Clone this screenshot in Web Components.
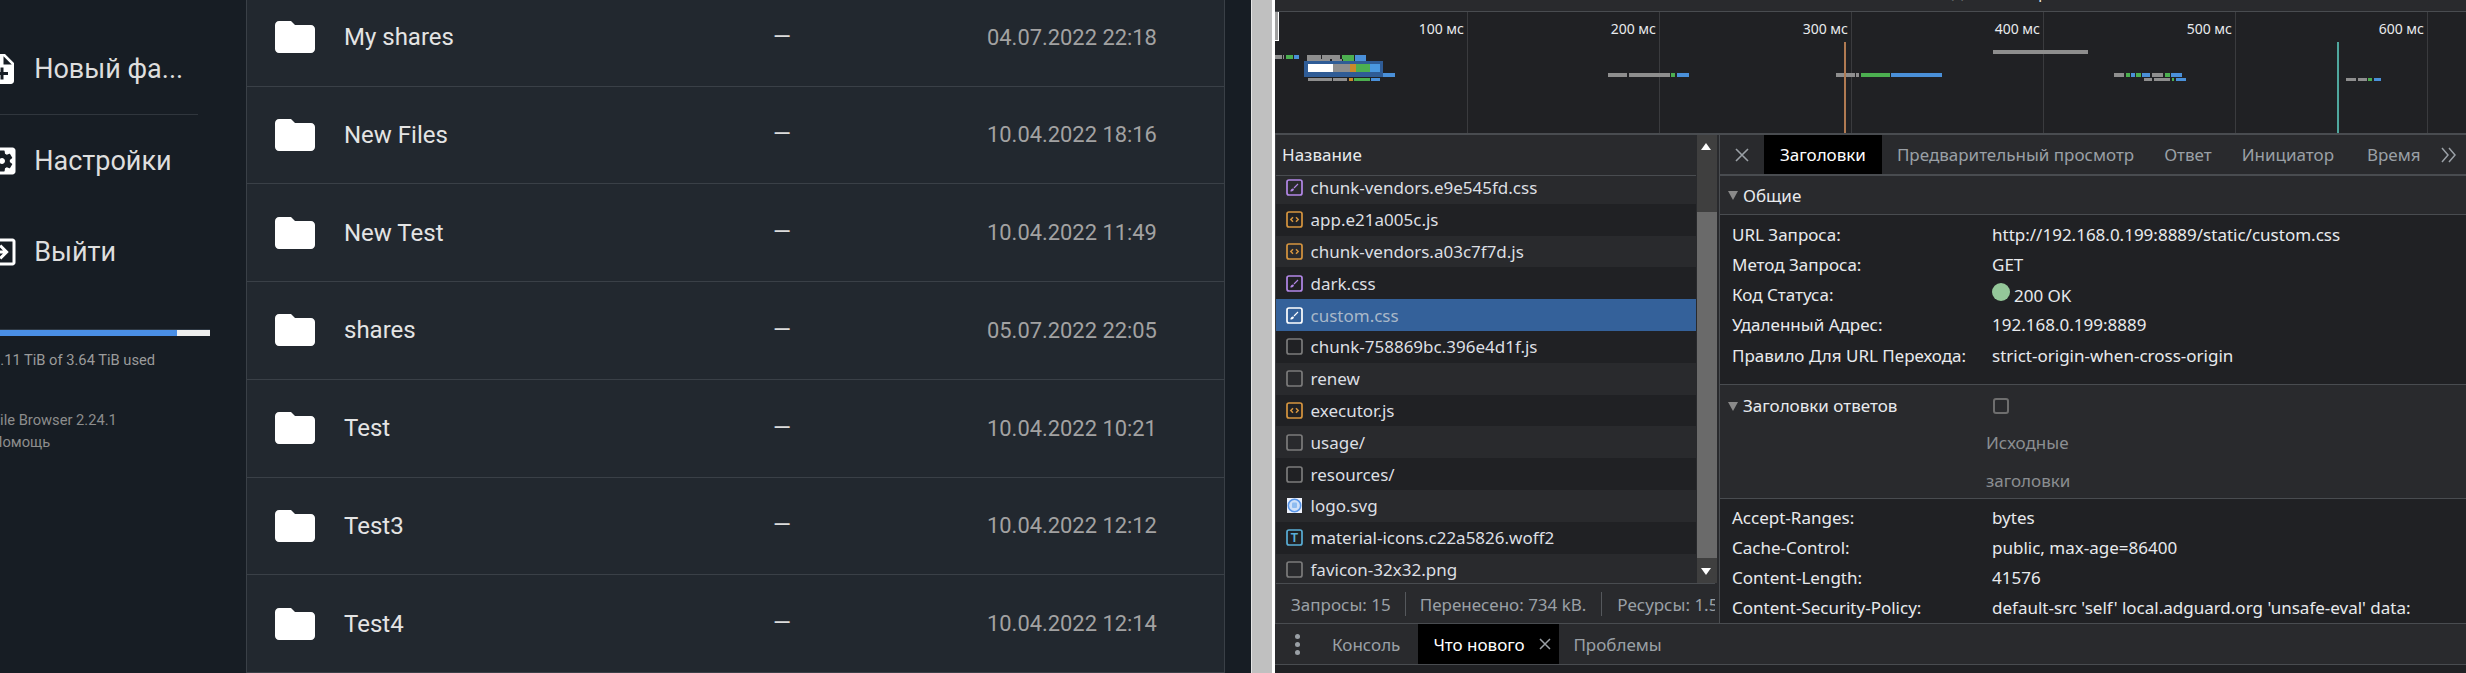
<!DOCTYPE html>
<html lang="ru">
<head>
<meta charset="utf-8">
<title>File Browser + DevTools</title>
<style>
  html, body { margin: 0; height: 673px; overflow: hidden; background: #171d24; }
</style>
</head>
<body>
<split-shell>
  <fb-app slot="left">
    <fb-sidebar slot="side">
      <fb-nav icon="note">Новый фа...</fb-nav>
      <fb-nav icon="settings" divided>Настройки</fb-nav>
      <fb-nav icon="exit">Выйти</fb-nav>
    </fb-sidebar>
    <fb-row date="04.07.2022 22:18">My shares</fb-row>
    <fb-row date="10.04.2022 18:16">New Files</fb-row>
    <fb-row date="10.04.2022 11:49">New Test</fb-row>
    <fb-row date="05.07.2022 22:05">shares</fb-row>
    <fb-row date="10.04.2022 10:21">Test</fb-row>
    <fb-row date="10.04.2022 12:12">Test3</fb-row>
    <fb-row date="10.04.2022 12:14">Test4</fb-row>
  </fb-app>
  <dt-window slot="right">
    <dt-overview slot="overview"></dt-overview>
    <dt-requests slot="list">
      <dt-request type="css">chunk-vendors.e9e545fd.css</dt-request>
      <dt-request type="js">app.e21a005c.js</dt-request>
      <dt-request type="js">chunk-vendors.a03c7f7d.js</dt-request>
      <dt-request type="css">dark.css</dt-request>
      <dt-request type="css" selected>custom.css</dt-request>
      <dt-request type="doc">chunk-758869bc.396e4d1f.js</dt-request>
      <dt-request type="doc">renew</dt-request>
      <dt-request type="js">executor.js</dt-request>
      <dt-request type="doc">usage/</dt-request>
      <dt-request type="doc">resources/</dt-request>
      <dt-request type="svg">logo.svg</dt-request>
      <dt-request type="font">material-icons.c22a5826.woff2</dt-request>
      <dt-request type="doc">favicon-32x32.png</dt-request>
    </dt-requests>
    <dt-details slot="details">
      <dt-section title="Общие">
        <dt-kv key="URL Запроса:">http://192.168.0.199:8889/static/custom.css</dt-kv>
        <dt-kv key="Метод Запроса:">GET</dt-kv>
        <dt-kv key="Код Статуса:" status>200 OK</dt-kv>
        <dt-kv key="Удаленный Адрес:">192.168.0.199:8889</dt-kv>
        <dt-kv key="Правило Для URL Перехода:">strict-origin-when-cross-origin</dt-kv>
      </dt-section>
      <dt-section title="Заголовки ответов" raw>
        <dt-kv key="Accept-Ranges:">bytes</dt-kv>
        <dt-kv key="Cache-Control:">public, max-age=86400</dt-kv>
        <dt-kv key="Content-Length:">41576</dt-kv>
        <dt-kv key="Content-Security-Policy:">default-src 'self' local.adguard.org 'unsafe-eval' data:</dt-kv>
      </dt-section>
    </dt-details>
    <dt-drawer slot="drawer"></dt-drawer>
  </dt-window>
</split-shell>

<script>
const DT_FONT = `"Noto Sans", "Open Sans", sans-serif`;
const ROBOTO = `Roboto, "Noto Sans", sans-serif`;

function define(name, css, html, setup) {
  customElements.define(name, class extends HTMLElement {
    constructor() {
      super();
      this.attachShadow({ mode: 'open' });
      const source = typeof html === 'function' ? html(this) : html;
      this.shadowRoot.innerHTML = `<style>${css}</style>${source}`;
    }
    connectedCallback() {
      if (setup) setup(this);
    }
  });
}

const ICONS = {
  note: 'M14 2H6c-1.1 0-1.99.9-1.99 2L4 20c0 1.1.89 2 1.99 2H18c1.1 0 2-.9 2-2V8l-6-6zm2 14h-3v3h-2v-3H8v-2h3v-3h2v3h3v2zm-3-7V3.5L18.5 9H13z',
  settings: 'M12 10c-1.1 0-2 .9-2 2s.9 2 2 2 2-.9 2-2-.9-2-2-2zm7-7H5c-1.11 0-2 .9-2 2v14c0 1.1.89 2 2 2h14c1.11 0 2-.9 2-2V5c0-1.1-.89-2-2-2zm-1.75 9c0 .23-.02.46-.05.68l1.48 1.16c.13.11.17.3.08.45l-1.4 2.42c-.09.15-.27.21-.43.15l-1.74-.7c-.36.28-.76.51-1.18.69l-.26 1.85c-.03.17-.18.3-.35.3h-2.8c-.17 0-.32-.13-.35-.29l-.26-1.85c-.43-.18-.82-.41-1.18-.69l-1.74.7c-.16.06-.34 0-.43-.15l-1.4-2.42c-.09-.15-.05-.34.08-.45l1.48-1.16c-.03-.23-.05-.46-.05-.69 0-.23.02-.46.05-.68l-1.48-1.16c-.13-.11-.17-.3-.08-.45l1.4-2.42c.09-.15.27-.21.43-.15l1.74.7c.36-.28.76-.51 1.18-.69l.26-1.85c.03-.17.18-.3.35-.3h2.8c.17 0 .32.13.35.29l.26 1.85c.43.18.82.41 1.18.69l1.74-.7c.16-.06.34 0 .43.15l1.4 2.42c.09.15.05.34-.08.45l-1.48 1.16c.03.23.05.46.05.69z',
  exit: 'M10.09 15.59L11.5 17l5-5-5-5-1.41 1.41L12.67 11H3v2h9.67l-2.58 2.59zM19 3H5c-1.11 0-2 .9-2 2v4h2V5h14v14H5v-4H3v4c0 1.1.89 2 2 2h14c1.1 0 2-.9 2-2V5c0-1.1-.9-2-2-2z',
  folder: 'M10 4H4c-1.1 0-1.99.9-1.99 2L2 18c0 1.1.9 2 2 2h16c1.1 0 2-.9 2-2V8c0-1.1-.9-2-2-2h-8l-2-2z'
};

define('split-shell', `
  :host { display: flex; width: 2466px; height: 673px; overflow: hidden; }
  .left { flex: 0 0 1251px; }
  .gutter { flex: 0 0 24px; box-sizing: border-box; background: #c0c0c0; border-left: 1px solid #e4e4e4; border-right: 3px solid #fff; }
  .right { flex: 1; min-width: 0; }
`, `<div class="left"><slot name="left"></slot></div><div class="gutter"></div><div class="right"><slot name="right"></slot></div>`);

define('fb-app', `
  :host { display: flex; height: 673px; background: #171d24; font-family: ${ROBOTO}; }
  .table { flex: 0 0 979px; height: 673px; overflow: hidden; box-sizing: border-box;
    background: #22282f; border-left: 1px solid #3a4047; border-right: 1px solid #3a4047; }
  .rows { margin-top: -11.15px; }
`, `<slot name="side"></slot><div class="table"><div class="rows"><slot></slot></div></div>`);

define('fb-sidebar', `
  :host { display: block; flex: 0 0 246px; width: 246px; padding-top: 23.5px; box-sizing: border-box; overflow: hidden; }
  .meter { display: flex; height: 6px; margin: 30.5px 0 0 -16px; width: 226px; border-top: 1px solid #2f3944; }
  .meter b { flex: 0 0 193px; background: #4a8fe6; }
  .meter i { flex: 1; background: #eeeeee; }
  .used { margin: 14.5px 0 0 -8px; font-size: 14.7px; line-height: 20px; color: #9b9b9b; white-space: nowrap; }
  .credits { margin: 40px 0 0 -8px; font-size: 14.7px; line-height: 21.5px; color: #8d8d8d; white-space: nowrap; }
`, `<slot></slot>
  <div class="meter"><b></b><i></i></div>
  <div class="used">3.11 TiB of 3.64 TiB used</div>
  <div class="credits">File Browser 2.24.1<br>Помощь</div>`);

define('fb-nav', `
  :host { display: flex; align-items: center; height: 91.5px; box-sizing: border-box; color: #dedede; font-size: 27px; white-space: nowrap; }
  svg { flex: 0 0 36px; width: 36px; height: 36px; margin-left: -16px; fill: #fff; }
  span { margin-left: 14.2px; }
  :host([divided]) { position: relative; }
  .rule { display: none; position: absolute; left: 0; top: -1px; width: 198px; height: 1px; background: #30363d; }
  :host([divided]) .rule { display: block; }
`, el => `<div class="rule"></div><svg viewBox="0 0 24 24"><path fill-rule="evenodd" d="${ICONS[el.getAttribute('icon')]}"/></svg><span><slot></slot></span>`);

define('fb-row', `
  :host { display: grid; grid-template-columns: 73px 429px 214px 1fr; align-items: center; box-sizing: border-box;
    height: 97.75px; padding-left: 24px; border-bottom: 1px solid #3a4047; color: #e4e4e4; font-size: 24px; white-space: nowrap; }
  svg { width: 48px; height: 48px; fill: #fff; }
  .size { color: #dcdcdc; font-size: 23px; }
  .date { color: #a2a2a2; font-size: 21.9px; }
`, el => `<svg viewBox="0 0 24 24"><path d="${ICONS.folder}"/></svg><div><slot></slot></div><div class="size">—</div><div class="date">${el.getAttribute('date')}</div>`);

define('dt-window', `
  :host { display: flex; flex-direction: column; height: 673px; background: #292a2d; font-family: ${DT_FONT}; font-size: 17px; color: #e8eaed; }
  .toolbar { flex: 0 0 11px; overflow: hidden; display: flex; line-height: 20px; border-bottom: 1px solid #494c50; white-space: nowrap; font-size: 15px; }
  .toolbar span { margin-top: -18px; height: 20px; }
  .panes { flex: 0 0 490px; display: flex; height: 490px; overflow: hidden; border-top: 2px solid #494c50; box-sizing: border-box; }
  .panes ::slotted([slot=list]) { flex: 0 0 444px; }
  .panes ::slotted([slot=details]) { flex: 1; min-width: 0; }
`, `<div class="toolbar"><span style="margin-left:148px">данных</span><span style="margin-left:474px">Данные</span><span style="margin-left:18px">Прочее</span></div>
  <slot name="overview"></slot>
  <div class="panes"><slot name="list"></slot><slot name="details"></slot></div>
  <slot name="drawer"></slot>`);

// waterfall bars as [x1, x2, y, colour], in page coordinates
const G = '#8e8e8e', GR = '#4caf50', B = '#4a90d9', O = '#c98a2b';
const BARS = [
  [1275.3, 1281.7, 55, G], [1282.7, 1284.3, 55, G], [1285.7, 1293.3, 55, GR], [1294.3, 1298.7, 55, B],
  [1306.7, 1321, 55, G], [1322, 1340.3, 55, G], [1341.7, 1353.7, 55, GR], [1354.7, 1365.7, 55, B],
  [1306.7, 1330.3, 59, G], [1331.7, 1342, 59, G], [1343, 1354, 59, GR], [1355, 1366, 59, B],
  [1382.7, 1395.3, 73, B],
  [1307.7, 1332, 77.5, G], [1333, 1347, 77.5, G], [1349.3, 1352.7, 77.5, O], [1354.3, 1369.7, 77.5, GR], [1370.7, 1380, 77.5, B],
  [1608.3, 1627.4, 73, G], [1629, 1669.5, 73, G], [1671, 1675, 73, GR], [1677, 1688.6, 73, B],
  [1836, 1855, 73, G], [1856, 1859.3, 73, G], [1861, 1889.8, 73, GR], [1891, 1942, 73, B],
  [1992.6, 2088, 50, G],
  [2114, 2120.5, 73, G], [2121.3, 2124.4, 73, G], [2126, 2129.8, 73, GR], [2131, 2134.8, 73, B],
  [2136.4, 2141, 73, GR], [2142, 2150, 73, B], [2151.5, 2163, 73, G], [2164.6, 2169.6, 73, GR], [2170.8, 2181.6, 73, B],
  [2143.7, 2152.2, 77.5, G], [2153.8, 2170, 77.5, G], [2171.6, 2174.3, 77.5, GR], [2176.2, 2185.9, 77.5, B],
  [2345.9, 2356, 77.5, G], [2357.9, 2367, 77.5, G], [2368.3, 2372.2, 77.5, GR], [2373.7, 2381, 77.5, B]
];
const SELECTED = [[0, 25.6, '#fff'], [25.6, 42.3, '#8e8e8e'], [42.3, 48.3, '#c98a2b'], [48.3, 62.3, '#4caf50'], [62.3, 72.3, '#4a98e0']];

define('dt-overview', `
  :host { display: block; flex: 0 0 121px; height: 121px; position: relative; background: #202124; overflow: hidden; }
  .grid { display: flex; height: 121px; padding-left: 1px; }
  .tick { flex: 0 0 192px; box-sizing: border-box; border-right: 1px solid #3a3b3e; text-align: right; padding: 5px 3px 0 0; line-height: 24px; font-size: 14px; color: #e8eaed; white-space: nowrap; }
  .bar { position: absolute; height: 3.5px; }
  .handle { position: absolute; left: 0; top: 0; width: 3px; height: 28px; background: #a0a0a0; border: solid #fff; border-width: 0 1.5px 1px 0; }
  .sel { position: absolute; left: 29.3px; top: 49px; width: 78.7px; height: 15.7px; background: #2f5c96; }
  .sel i { position: absolute; top: 3px; height: 8px; }
  .mark { position: absolute; top: 30px; bottom: 0; width: 2px; }
`, () => {
  const ticks = [100, 200, 300, 400, 500, 600].map(n => `<div class="tick">${n} мс</div>`).join('');
  const bars = BARS.map(([a, b, y, c]) =>
    `<div class="bar" style="left:${(a - 1275).toFixed(1)}px;width:${(b - a).toFixed(1)}px;top:${y - 12}px;background:${c}"></div>`).join('');
  const sel = SELECTED.map(([a, b, c]) => `<i style="left:${a + 3.4}px;width:${(b - a).toFixed(1)}px;background:${c}"></i>`).join('');
  return `<div class="grid">${ticks}</div>${bars}<div class="sel">${sel}</div><div class="handle"></div>
    <div class="mark" style="left:569px;background:#b07a52"></div><div class="mark" style="left:1062px;background:#4fa79e"></div>`;
});

define('dt-requests', `
  :host { display: flex; flex-direction: column; height: 488px; box-sizing: border-box; border-left: 1px solid #3c3d40; overflow: hidden; }
  .col { flex: 0 0 420px; display: flex; flex-direction: column; min-width: 0; }
  .title { flex: 0 0 41px; height: 41px; box-sizing: border-box; border-bottom: 1px solid #494c50; padding: 0 0 0 6px; line-height: 40px; color: #e8eaed; }
  .items { height: 407px; overflow: hidden; }
  .items-in { margin-top: -4px; }
  .scroll { flex: 0 0 20px; margin-left: 1px; background: #3f3f3f; position: relative; }
  .scroll .up, .scroll .down { position: absolute; left: 4px; width: 0; height: 0; border: 5.5px solid transparent; }
  .scroll .up { top: 8px; border-top: 0; border-bottom: 7px solid #fff; }
  .scroll .down { bottom: 8px; border-bottom: 0; border-top: 7px solid #fff; }
  .thumb { position: absolute; left: 0; right: 0; top: 77px; height: 346px; background: #6a6a6a; }
  .wrap { display: flex; height: 448px; }
  .foot { flex: 0 0 41px; height: 41px; box-sizing: border-box; border-top: 1px solid #494c50; display: flex; align-items: center; color: #9aa0a6; white-space: nowrap; overflow: hidden; padding-left: 15px; width: 439px; }
  .foot i { width: 1px; height: 24px; background: #55585c; margin: 0 14px; flex: none; }
  .foot i.wide { margin-left: 15px; margin-right: 15px; }
`, `<div class="wrap"><div class="col"><div class="title">Название</div><div class="items"><div class="items-in"><slot></slot></div></div></div>
    <div class="scroll"><div class="up"></div><div class="thumb"></div><div class="down"></div></div></div>
  <div class="foot"><span>Запросы: 15</span><i></i><span>Перенесено: 734 kB.</span><i class="wide"></i><span>Ресурсы: 1.5</span></div>`);

function fileIcon(type) {
  const frame = c => `<rect x="1" y="1" width="15" height="15" rx="2" fill="none" stroke="${c}" stroke-width="1.7"/>`;
  if (type === 'css') return frame('var(--css, #b387e8)') + `<path d="M12 5 L8 9" stroke="var(--css, #b387e8)" stroke-width="1.1"/><path d="M4.3 12.2 C4.8 10.2 6 9.3 7.4 9.6 L7.9 10.2 C7.8 11.8 6 12.8 4.3 12.2 Z" fill="var(--css, #b387e8)"/>`;
  if (type === 'js') return frame('#d6953f') + `<path d="M7 6.2 L4.8 8.5 L7 10.8 M10 6.2 L12.2 8.5 L10 10.8" fill="none" stroke="#d6953f" stroke-width="1.5"/>`;
  if (type === 'font') return frame('#59aed6') + `<text x="8.5" y="13" text-anchor="middle" font-family="Liberation Sans" font-weight="700" font-size="12" fill="#59aed6">T</text>`;
  if (type === 'svg') return `<rect x="1" y="1" width="15" height="15" fill="#eef2fb"/><circle cx="8.5" cy="8.5" r="6.2" fill="#cfe0f8" stroke="#5b98ea" stroke-width="1.6"/><rect x="6" y="5.5" width="5" height="5.5" rx="1" fill="#8fbcf0"/>`;
  return frame('#7b7b7b');
}

define('dt-request', `
  :host { display: flex; align-items: center; height: 31.8px; padding-left: 9.5px; color: #dcdfe3; white-space: nowrap; background: #202124; }
  :host(:nth-child(odd)) { background: #292a2d; }
  svg { flex: 0 0 17px; width: 17px; height: 17px; margin-right: 8px; }
  :host([selected]) { background: #34619a !important; color: #a9b8c9; --css: #fff; }
`, el => `<svg viewBox="0 0 17 17">${fileIcon(el.getAttribute('type'))}</svg><slot></slot>`);

define('dt-details', `
  :host { display: block; height: 488px; border-left: 1px solid #494c50; overflow: hidden; }
  .tabs { display: flex; align-items: stretch; height: 39px; border-bottom: 2px solid #494c50; color: #9aa0a6; white-space: nowrap; }
  .close { flex: 0 0 44px; display: flex; align-items: center; justify-content: center; }
  .tab { display: flex; align-items: center; }
  .tab.on { background: #000; color: #fff; padding: 0 16px; margin-right: 15px; }
  .tab.plain { margin-right: 30px; }
  svg { fill: none; stroke: #9aa0a6; }
  .more { margin-left: -1px; display: flex; align-items: center; }
`, `<div class="tabs">
    <div class="close"><svg width="14" height="14" viewBox="0 0 14 14" stroke-width="1.6"><path d="M1 1 L13 13 M13 1 L1 13"/></svg></div>
    <div class="tab on">Заголовки</div>
    <div class="tab plain">Предварительный просмотр</div>
    <div class="tab plain">Ответ</div>
    <div class="tab plain" style="margin-right:33px">Инициатор</div>
    <div class="tab plain" style="margin-right:20px">Время</div>
    <div class="more"><svg width="18" height="16" viewBox="0 0 18 16" stroke-width="1.5"><path d="M2 1 L8 8 L2 15 M9 1 L15 8 L9 15"/></svg></div>
  </div><slot></slot>`);

define('dt-section', `
  :host { display: block; }
  .head { display: flex; align-items: center; height: 39px; border-bottom: 1px solid #494c50; box-sizing: border-box; padding-left: 8px; color: #e8eaed; white-space: nowrap; }
  .head.raw { align-items: flex-start; height: 114px; }
  .tri { width: 0; height: 0; border: 5px solid transparent; border-top: 9px solid #8a8a8a; border-bottom: 0; margin-right: 5px; }
  .raw .tri { margin-top: 17px; }
  .raw .name { line-height: 42px; flex: 0 0 248px; }
  .rawbox { display: flex; flex-direction: column; margin-left: -5px; }
  .check { width: 16px; height: 16px; box-sizing: border-box; border: 2px solid #6e6e6e; border-radius: 3px; margin: 13px 0 0 7px; }
  .lbl { color: #8b8e91; line-height: 38px; }
  .lbl.a { margin-top: 10px; }
  .body { background: #202124; }
  .body.gen { height: 170px; padding-top: 4px; box-sizing: border-box; border-bottom: 1px solid #494c50; }
  .body.res { height: 126px; padding-top: 3px; box-sizing: border-box; }
`, el => {
  const raw = el.hasAttribute('raw');
  const t = el.getAttribute('title');
  el.removeAttribute('title');
  return raw
    ? `<div class="head raw"><div class="tri"></div><div class="name">${t}</div><div class="rawbox"><div class="check"></div><div class="lbl a">Исходные</div><div class="lbl">заголовки</div></div></div><div class="body res"><slot></slot></div>`
    : `<div class="head"><div class="tri"></div><div>${t}</div></div><div class="body gen"><slot></slot></div>`;
});

define('dt-kv', `
  :host { display: grid; grid-template-columns: 260px 1fr; align-items: center; height: 30.25px; padding-left: 12px; white-space: nowrap; color: #e8eaed; }
  .dot { display: inline-block; width: 18px; height: 18px; border-radius: 50%; background: #94c799; margin-right: 4px; vertical-align: 1px; }
`, el => `<div>${el.getAttribute('key')}</div><div>${el.hasAttribute('status') ? '<span class="dot"></span>' : ''}<slot></slot></div>`);

define('dt-drawer', `
  :host { display: flex; flex-direction: column; flex: 1; color: #9aa0a6; white-space: nowrap; }
  .bar { display: flex; align-items: stretch; height: 41px; box-sizing: border-box; border-top: 1px solid #494c50; padding-left: 20px; }
  .dots { display: flex; flex-direction: column; justify-content: center; gap: 3px; width: 37px; }
  .dots i { width: 5px; height: 5px; border-radius: 50%; background: #9aa0a6; }
  .tab { display: flex; align-items: center; }
  .on { background: #000; color: #fff; width: 141px; padding: 0 8px 0 15px; box-sizing: border-box; margin: 0 14px 0 18px; }
  .on svg { margin-left: auto; stroke: #9aa0a6; fill: none; }
  .rest { flex: 1; background: #202124; border-top: 1px solid #494c50; }
`, `<div class="bar">
    <div class="dots"><i></i><i></i><i></i></div>
    <div class="tab">Консоль</div>
    <div class="tab on">Что нового<svg width="12" height="12" viewBox="0 0 12 12" stroke-width="1.5"><path d="M1 1 L11 11 M11 1 L1 11"/></svg></div>
    <div class="tab">Проблемы</div>
  </div><div class="rest"></div>`);
</script>
</body>
</html>
